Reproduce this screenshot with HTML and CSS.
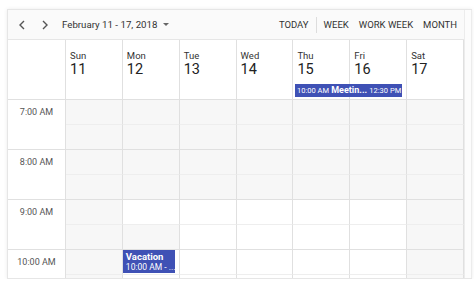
FILE: index.html
```html
<!DOCTYPE html>
<html lang="en">
<head>
  <meta charset="UTF-8">
  <title>Scheduler - Week</title>
  <link rel="stylesheet" href="styles.css">
</head>
<body>
  <div class="scheduler">
    <div class="main">
      <div class="toolbar">
        <button class="nav-btn" aria-label="Previous">
          <svg width="8" height="10" viewBox="0 0 8 10"><path d="M6 1 L2 5 L6 9" fill="none" stroke="#555" stroke-width="1.4"/></svg>
        </button>
        <button class="nav-btn" aria-label="Next">
          <svg width="8" height="10" viewBox="0 0 8 10"><path d="M2 1 L6 5 L2 9" fill="none" stroke="#555" stroke-width="1.4"/></svg>
        </button>
        <div class="date-range">February 11 - 17, 2018 <span class="caret"></span></div>
        <div class="views">
          <span class="view today">TODAY</span>
          <span class="sep"></span>
          <span class="view">WEEK</span>
          <span class="view">WORK WEEK</span>
          <span class="view">MONTH</span>
        </div>
      </div>

      <div class="header">
        <div class="corner"></div>
        <div class="day-head"><span class="day-name">Sun</span><span class="day-num">11</span></div>
        <div class="day-head"><span class="day-name">Mon</span><span class="day-num">12</span></div>
        <div class="day-head"><span class="day-name">Tue</span><span class="day-num">13</span></div>
        <div class="day-head"><span class="day-name">Wed</span><span class="day-num">14</span></div>
        <div class="day-head"><span class="day-name">Thu</span><span class="day-num">15</span></div>
        <div class="day-head"><span class="day-name">Fri</span><span class="day-num">16</span></div>
        <div class="day-head"><span class="day-name">Sat</span><span class="day-num">17</span></div>
        <div class="allday-event">
          <span class="small">10:00 AM</span> <b>Meetin...</b> <span class="small">12:30 PM</span>
        </div>
      </div>

      <div class="body" id="grid"></div>
    </div>
    <div class="gutter"></div>
  </div>

  <script>
    const grid = document.getElementById("grid");
    const hours = ["7:00 AM", "8:00 AM", "9:00 AM", "10:00 AM"];

    hours.forEach((label, h) => {
      for (let half = 0; half < 2; half++) {
        if (half === 0) {
          const t = document.createElement("div");
          t.className = "time";
          t.textContent = label;
          grid.appendChild(t);
        }
        for (let d = 0; d < 7; d++) {
          const cell = document.createElement("div");
          cell.className = "slot" + (half === 0 ? " half" : "");
          const workHour = h >= 2 && d > 0 && d < 6;
          if (!workHour) cell.classList.add("off");
          if (h === 2 && half === 1 && d === 1) cell.classList.add("off");
          if (h === 3 && half === 0 && d === 1) {
            cell.innerHTML = '<div class="event"><b>Vacation</b><span>10:00 AM - ...</span></div>';
          }
          grid.appendChild(cell);
        }
      }
    });
  </script>
</body>
</html>
```

FILE: styles.css
```css
body {
  margin: 0;
  background: #fff;
  font-family: Roboto, "Liberation Sans", Arial, sans-serif;
  color: #333;
}
.scheduler {
  display: flex;
  margin: 9px 0 0 7px;
  width: 464px;
  height: 268px;
  border: 1px solid #e6e6e6;
  border-right: none;
  box-shadow: 0 0 4px rgba(0, 0, 0, 0.08);
  overflow: hidden;
  background: #fff;
}
.main {
  width: 458px;
  display: flex;
  flex-direction: column;
}
.gutter {
  width: 6px;
  border-left: 1px solid #ececec;
  border-right: 1px solid #ececec;
  background: #fcfcfc;
}
.toolbar {
  flex-shrink: 0;
  height: 29px;
  display: flex;
  align-items: center;
  background: #fafafa;
  border-bottom: 1px solid #e6e6e6;
  padding-left: 2px;
}
.nav-btn {
  border: none;
  background: none;
  padding: 0;
  width: 23px;
  height: 20px;
  display: flex;
  align-items: center;
  justify-content: center;
}
.date-range {
  margin-left: 6px;
  font-size: 9.7px;
  color: #333;
  display: flex;
  align-items: center;
}
.caret {
  display: inline-block;
  margin-left: 6px;
  border-left: 3px solid transparent;
  border-right: 3px solid transparent;
  border-top: 3px solid #666;
}
.views {
  margin-left: auto;
  display: flex;
  align-items: center;
  font-size: 9.5px;
  color: #333;
  padding-right: 7px;
}
.view {
  margin-left: 10px;
}
.view.today {
  margin-left: 0;
}
.sep {
  width: 1px;
  height: 16px;
  background: #ddd;
  margin: 0 -3px 0 7px;
}
.header {
  flex-shrink: 0;
  position: relative;
  display: grid;
  grid-template-columns: 58px repeat(7, 1fr);
  height: 59px;
  border-bottom: 1px solid #e0e0e0;
}
.corner, .day-head {
  border-right: 1px solid #e0e0e0;
}
.day-head {
  display: flex;
  flex-direction: column;
  padding: 10px 0 0 4px;
}
.day-name {
  font-size: 9.5px;
  line-height: 11px;
  color: #333;
}
.day-num {
  font-size: 14.5px;
  line-height: 17px;
  color: #222;
}
.allday-event {
  position: absolute;
  left: 287px;
  top: 44px;
  width: 107px;
  height: 13px;
  background: #3f51b5;
  color: #fff;
  font-size: 9px;
  line-height: 13px;
  white-space: nowrap;
  overflow: hidden;
  padding-left: 2px;
  box-sizing: border-box;
}
.allday-event .small {
  font-size: 7.5px;
}
.body {
  flex: 1;
  min-height: 0;
  display: grid;
  grid-template-columns: 58px repeat(7, 1fr);
  grid-auto-rows: 25px;
  overflow: hidden;
}
.time {
  grid-row: span 2;
  border-right: 1px solid #e0e0e0;
  border-bottom: 1px solid #e0e0e0;
  font-size: 9px;
  color: #555;
  text-align: center;
  padding-top: 7px;
}
.slot {
  position: relative;
  border-right: 1px solid #e0e0e0;
  border-bottom: 1px solid #e0e0e0;
  background: #fff;
}
.slot.half {
  border-bottom-color: #eeeeee;
}
.slot.off {
  background: #f7f7f7;
}
.event {
  position: absolute;
  left: 0;
  top: 0;
  width: 52px;
  height: 23px;
  background: #3f51b5;
  color: #fff;
  padding: 1px 0 0 3px;
  box-sizing: border-box;
  display: flex;
  flex-direction: column;
  font-size: 8.5px;
  line-height: 10px;
  white-space: nowrap;
  overflow: hidden;
}
.event b {
  font-size: 9.5px;
  line-height: 11px;
}
```
